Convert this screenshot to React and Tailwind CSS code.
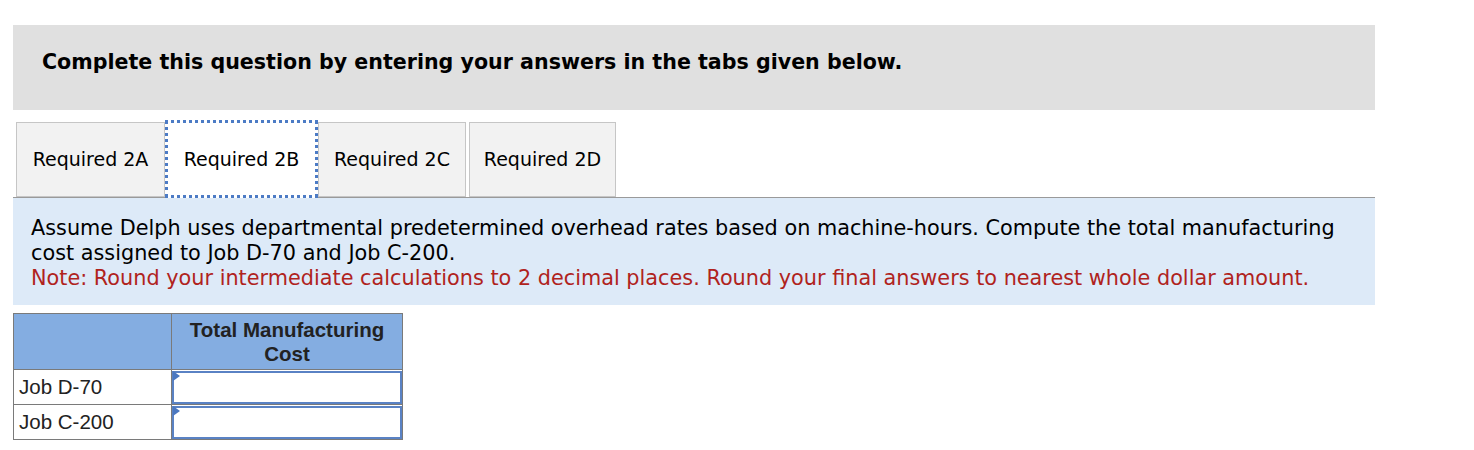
const rows = ["Job D-70", "Job C-200"];

const tabs = [
  { label: "Required 2A", w: "w-[149px]" },
  { label: "Required 2B", w: "w-[153px]", active: true },
  { label: "Required 2C", w: "w-[148px]" },
  { label: "Required 2D", w: "w-[147px]" },
];

export default function App() {
  return (
    <div className="min-h-[450px] bg-white pt-[25px] pl-[13px] text-black" style={{ fontFamily: '"DejaVu Sans", Verdana, sans-serif' }}>
      <div className="w-[1362px]">
        {/* instructions bar */}
        <div className="h-[85px] bg-[#e0e0e0] pl-[29px] pt-[23px]">
          <h2 className="text-[20.6px] font-bold leading-[28px]">
            Complete this question by entering your answers in the tabs given below.
          </h2>
        </div>

        {/* tabs */}
        <div className="mt-[10px] flex h-[77px] items-end pl-[3px]">
          {tabs.map((t, i) => (
            <div
              key={t.label}
              className={
                t.active
                  ? "relative z-10 -mb-[1px] flex h-[78px] w-[153px] items-center justify-center border-[3px] border-dotted border-[#4c7bc5] bg-white text-[19px]"
                  : `flex h-[75px] ${t.w} items-center justify-center border border-[#c6c6c6] bg-[#f2f2f2] text-[19px] ${i === 3 ? "ml-[3px]" : ""}`
              }
            >
              {t.label}
            </div>
          ))}
        </div>

        {/* question text */}
        <div className="border-t border-[#9a9a9a] bg-[#ddeaf8] pb-[14px] pl-[18px] pt-[18px] text-[20.8px] leading-[25px]">
          <p>
            Assume Delph uses departmental predetermined overhead rates based on machine-hours. Compute the total manufacturing
            <br />
            cost assigned to Job D-70 and Job C-200.
          </p>
          <p className="text-[#b0231d]">
            Note: Round your intermediate calculations to 2 decimal places. Round your final answers to nearest whole dollar amount.
          </p>
        </div>

        {/* answer table */}
        <table
          className="mt-[8px] border-collapse text-[20.5px]"
          style={{ fontFamily: '"Liberation Sans", Arial, sans-serif' }}
        >
          <thead>
            <tr className="bg-[#84ade1]">
              <th className="h-[56px] w-[158px] border border-[#7a7a7a]"></th>
              <th className="h-[56px] w-[231px] border border-[#7a7a7a] text-center font-bold leading-[24px] text-[#222]">
                Total Manufacturing
                <br />
                Cost
              </th>
            </tr>
          </thead>
          <tbody>
            {rows.map((r) => (
              <tr key={r}>
                <td className="h-[35px] border border-[#7a7a7a] pl-[5px] leading-[24px] text-[#222]">{r}</td>
                <td className="relative h-[35px] border border-[#7a7a7a] p-0">
                  <input
                    type="text"
                    className="block h-[33px] w-full border-2 border-[#5a82c4] bg-white px-2 outline-none"
                  />
                  <span className="pointer-events-none absolute left-[1px] top-[1px] h-0 w-0 border-y-[5px] border-l-[7px] border-y-transparent border-l-[#4b78c0]" />
                </td>
              </tr>
            ))}
          </tbody>
        </table>
      </div>
    </div>
  );
}
